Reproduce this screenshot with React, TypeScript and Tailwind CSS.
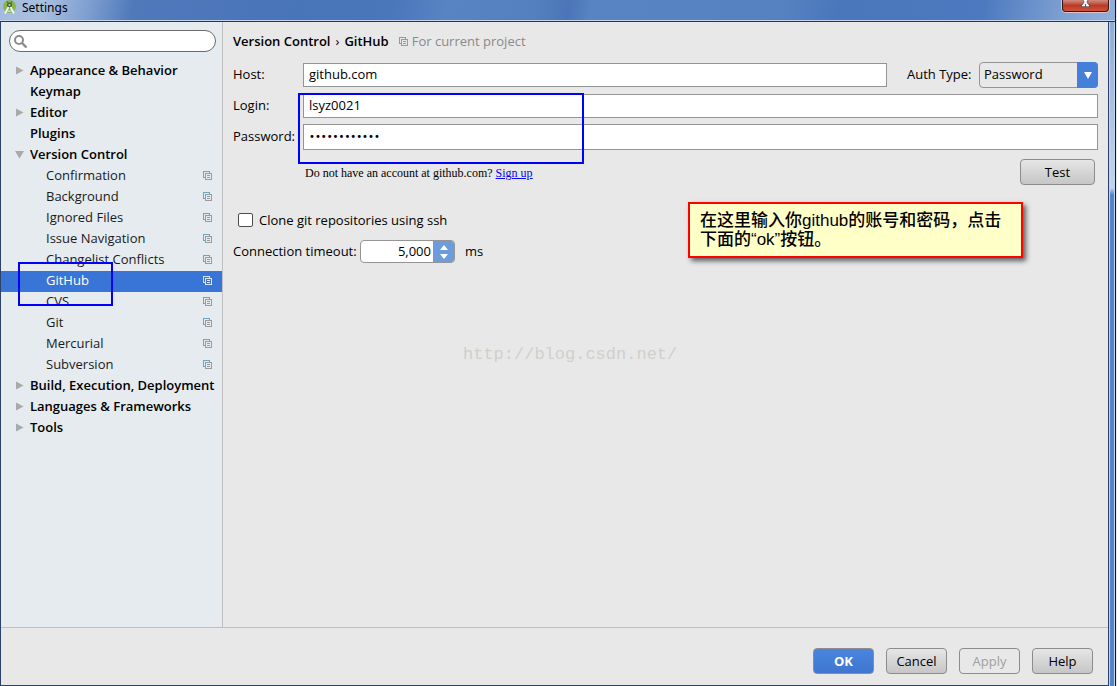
import { useState } from 'react';

type TreeItem = {
    label: string;
    level: 0 | 1;
    arrow?: 'right' | 'down';
};

const treeItems: TreeItem[] = [
    { label: 'Appearance & Behavior', level: 0, arrow: 'right' },
    { label: 'Keymap', level: 0 },
    { label: 'Editor', level: 0, arrow: 'right' },
    { label: 'Plugins', level: 0 },
    { label: 'Version Control', level: 0, arrow: 'down' },
    { label: 'Confirmation', level: 1 },
    { label: 'Background', level: 1 },
    { label: 'Ignored Files', level: 1 },
    { label: 'Issue Navigation', level: 1 },
    { label: 'Changelist Conflicts', level: 1 },
    { label: 'GitHub', level: 1 },
    { label: 'CVS', level: 1 },
    { label: 'Git', level: 1 },
    { label: 'Mercurial', level: 1 },
    { label: 'Subversion', level: 1 },
    { label: 'Build, Execution, Deployment', level: 0, arrow: 'right' },
    { label: 'Languages & Frameworks', level: 0, arrow: 'right' },
    { label: 'Tools', level: 0, arrow: 'right' }
];

const ProjectIcon = ({ selected = false }: { selected?: boolean }) => (
    <svg width="9" height="9" viewBox="0 0 9 9" fill="none" className="shrink-0" shapeRendering="crispEdges">
        <path d="M2 6.5H.5V.5H6.5V2" stroke={selected ? '#cfe0f7' : '#6aa5c4'} />
        <path d="M2.5 2.5h6v6h-6z" stroke={selected ? '#dfe7f5' : '#9b9b9b'} />
        <path d="M4 4.5h3M4 6.5h3" stroke={selected ? '#dfe7f5' : '#9b9b9b'} />
    </svg>
);

const TreeArrow = ({ direction }: { direction?: 'right' | 'down' }) => (
    <svg width="9" height="9" viewBox="0 0 9 9" fill="#a9a9a9" className="shrink-0">
        {direction === 'right' && <path d="M1 .5 8.5 4.5 1 8.500z" />}
        {direction === 'down' && <path d="M0 1h9L4.500 8.500z" />}
    </svg>
);

const AppLogo = () => (
    <svg width="15" height="15" viewBox="0 0 15 15" className="shrink-0">
        <circle cx="7.500" cy="6.500" r="6.500" fill="#86b940" />
        <circle cx="7.500" cy="5" r="2.600" fill="#4d5a4c" />
        <path d="M5 1 6 3M10 1 9 3" stroke="#4d5a4c" strokeWidth=".8" />
        <path d="M6.500 7 3 13.500M8.500 7l3.500 6.500" stroke="#f4f4f4" strokeWidth="1.800" />
        <path d="M4 10.500q3.500 1.500 7 0" stroke="#f4f4f4" strokeWidth="1" fill="none" />
        <circle cx="7.500" cy="5" r="1" fill="#cfd8c9" />
    </svg>
);

const TitleBar = () => (
    <div className="flex h-[22px] items-start justify-between border-b border-[#1f3763] bg-[linear-gradient(100deg,#a3bbdf_0%,#a9bfe0_4%,#7e9fd0_8%,#5079bb_12%,#4874b8_27%,#4a76ba_35%,#5884c4_40%,#5480c0_48%,#4b75b6_51%,#5884c4_53%,#5682c2_70%,#4a77bb_75%,#4c79bf_88%,#7c9fd2_95%,#93b0da_100%)] pl-[2px] shadow-[inset_0_-1px_0_#c3d3ec]">
        <div className="flex items-start gap-[5px]">
            <AppLogo />
            <span className="font-['Noto_Sans',sans-serif] text-xs leading-[15px]">Settings</span>
        </div>
        <button
            aria-label="Close"
            className="mr-[6px] flex h-3 w-[47px] items-start justify-center rounded-b border border-t-0 border-[#3d1712] bg-linear-to-b from-[#d08a7d] via-[#b93a25] to-[#d0533c] shadow-[0_0_0_1px_#d8c3cc]"
        >
            <svg width="11" height="7" viewBox="0 0 11 7">
                <path d="M3 -2 8 6M8 -2 3 6M1.500 5.500h3.500M6 5.500h3.500" stroke="#5b4a50" strokeWidth="3" />
                <path d="M3 -2 8 6M8 -2 3 6M2 5.500h3M6 5.500h3" stroke="#fff" strokeWidth="1.600" />
            </svg>
        </button>
    </div>
);

const Sidebar = () => {
    const [selected, setSelected] = useState('GitHub');
    const [query, setQuery] = useState('');

    return (
        <aside className="relative w-[222px] shrink-0 border-r border-[#c0c0c0] bg-[#e5ebef] pt-2">
            <div className="mx-2 mr-[6px] flex h-[22px] items-center gap-1 rounded-full border border-[#6b6b6b] bg-white pl-1">
                <svg width="13" height="13" viewBox="0 0 13 13" fill="none" stroke="#8c8c8c" strokeWidth="2" className="shrink-0">
                    <circle cx="5" cy="5" r="4" />
                    <path d="M8 8l4.500 4.500" strokeWidth="2.400" />
                </svg>
                <input
                    type="text"
                    aria-label="Search settings"
                    value={query}
                    onChange={(e) => setQuery(e.target.value)}
                    className="min-w-0 flex-1 bg-transparent outline-none"
                />
            </div>

            <ul className="mt-[9px]">
                {treeItems.map((item) => (
                    <li key={item.label}>
                        <button
                            onClick={() => setSelected(item.label)}
                            className={`flex h-[21px] w-full items-center pr-[10px] pb-[2px] pl-[14px] text-left whitespace-nowrap ${
                                selected === item.label ? 'bg-[#3875d7] text-white' : 'text-[#1a1a1a]'
                            }`}
                        >
                            <TreeArrow direction={item.arrow} />
                            <span className={item.level === 0 ? 'ml-[6px] flex-1 pb-[2px] font-semibold text-black' : 'ml-[22px] flex-1 pb-[2px]'}>
                                {item.label}
                            </span>
                            {item.level === 1 && <ProjectIcon selected={selected === item.label} />}
                        </button>
                    </li>
                ))}
            </ul>

            {/* Highlight around the GitHub entry */}
            <div className="pointer-events-none absolute top-[240px] left-[17px] h-11 w-[95px] border-2 border-[#0000ff]" />
        </aside>
    );
};

const GitHubPanel = () => {
    const [host, setHost] = useState('github.com');
    const [login, setLogin] = useState('lsyz0021');
    const [password, setPassword] = useState('abcdefghijkl');
    const [useSsh, setUseSsh] = useState(false);
    const [timeout, setTimeoutValue] = useState(5000);

    const fieldClass = 'min-w-0 flex-1 border border-[#949494] bg-white px-[5px] pb-[2px] outline-none';

    return (
        <main className="relative min-w-0 flex-1 px-[10px] pt-[9px]">
            <div className="flex h-5 items-center">
                <h1 className="flex gap-[5px] font-semibold">
                    Version Control <span className="font-normal">›</span> GitHub
                </h1>
                <span className="ml-[10px] flex items-center gap-1 text-[#8a8a8a]">
                    <ProjectIcon />
                    For current project
                </span>
            </div>

            <div className="mt-[11px] flex flex-col gap-[6px]">
                <div className="flex h-[26px] items-center">
                    <label htmlFor="host" className="w-[70px] pb-[2px]">Host:</label>
                    <input id="host" value={host} onChange={(e) => setHost(e.target.value)} className={`h-6 ${fieldClass}`} />
                    <label htmlFor="auth" className="ml-5 w-[72px] pb-[2px]">Auth Type:</label>
                    <div className="relative h-[26px] w-[119px]">
                        <select
                            id="auth"
                            className="h-full w-full appearance-none rounded-sm border border-[#949494] bg-[#e8e8e8] pb-[2px] pl-1 outline-none"
                        >
                            <option>Password</option>
                            <option>Token</option>
                        </select>
                        <span className="pointer-events-none absolute inset-y-0 right-0 flex w-[21px] items-center justify-center rounded-r-sm bg-[#467fd9]">
                            <svg width="8" height="7" viewBox="0 0 8 7" fill="#fff">
                                <path d="M0 0h8L4 7z" />
                            </svg>
                        </span>
                    </div>
                </div>
                <div className="flex h-6 items-center">
                    <label htmlFor="login" className="w-[70px] pb-[2px]">Login:</label>
                    <input id="login" value={login} onChange={(e) => setLogin(e.target.value)} className={`h-6 ${fieldClass}`} />
                </div>
                <div className="flex h-[26px] items-center">
                    <label htmlFor="password" className="w-[70px] pb-[2px]">Password:</label>
                    <input
                        id="password"
                        type="password"
                        value={password}
                        onChange={(e) => setPassword(e.target.value)}
                        className={`h-[26px] font-['DejaVu_Sans',sans-serif] text-[10px] ${fieldClass}`}
                    />
                </div>
            </div>

            <div className="mt-[9px] flex h-[26px] items-center justify-between pr-[3px] pl-[72px]">
                <p className="pt-[2px] font-['Liberation_Serif',serif] text-xs">
                    Do not have an account at github.com?{' '}
                    <a href="#signup" className="text-[#0000ff] underline">Sign up</a>
                </p>
                <button className="h-[26px] w-[75px] rounded-sm border border-[#8c8c8c] bg-linear-to-b from-[#e6e6e6] to-[#c6c6c6] pb-px">
                    Test
                </button>
            </div>

            <label className="mt-[25px] flex h-5 w-fit items-center gap-[6px] pl-[5px]">
                <input
                    type="checkbox"
                    checked={useSsh}
                    onChange={(e) => setUseSsh(e.target.checked)}
                    className="h-[14px] w-[15px] appearance-none rounded-xs border border-[#4d4d4d] bg-white checked:bg-[#467fd9]"
                />
                Clone git repositories using ssh
            </label>

            <div className="mt-[10px] flex h-[23px] items-center">
                <label htmlFor="timeout" className="w-[127px] pb-[2px]">Connection timeout:</label>
                <div className="flex h-[23px] w-[95px] overflow-hidden rounded-sm border border-[#949494] bg-white">
                    <input
                        id="timeout"
                        value={timeout.toLocaleString('en-US')}
                        onChange={(e) => setTimeoutValue(Number(e.target.value.replace(/\D/g, '')))}
                        className="min-w-0 flex-1 pr-[2px] pb-[2px] text-right outline-none"
                    />
                    <div className="flex w-[21px] flex-col items-center justify-center gap-1 bg-[#6e9bdb]">
                        <button aria-label="Increase timeout" onClick={() => setTimeoutValue(timeout + 1000)}>
                            <svg width="8" height="5" viewBox="0 0 8 5" fill="#fff" className="block">
                                <path d="M4 0l4 5H0z" />
                            </svg>
                        </button>
                        <button aria-label="Decrease timeout" onClick={() => setTimeoutValue(Math.max(0, timeout - 1000))}>
                            <svg width="8" height="5" viewBox="0 0 8 5" fill="#fff" className="block">
                                <path d="M0 0h8L4 5z" />
                            </svg>
                        </button>
                    </div>
                </div>
                <span className="ml-[10px] pb-[2px]">ms</span>
            </div>

            {/* Highlight around login and password */}
            <div className="pointer-events-none absolute top-[71px] left-[75px] h-[71px] w-[286px] border-2 border-[#0000ff]" />

            {/* Callout note */}
            <div className="absolute top-[180px] left-[465px] w-[335px] border-2 border-[#ff0000] bg-[#ffffc8] py-[7px] pr-2 pl-[10px] font-['Liberation_Sans','Noto_Sans_CJK_SC',sans-serif] text-[17px] leading-[19px] font-medium shadow-[3px_3px_5px_#00000099]">
                在这里输入你github的账号和密码，点击下面的“ok”按钮。
            </div>

            <span className="absolute top-[321px] left-[240px] font-['Liberation_Mono',monospace] text-[17px] leading-6 text-[#d0d0ca]">
                http://blog.csdn.net/
            </span>
        </main>
    );
};

const Footer = () => {
    const plain = 'h-[26px] w-[61px] rounded-sm border border-[#8c8c8c] pb-px';

    return (
        <footer className="flex h-[58px] items-start justify-end gap-3 border-t border-[#c0c0c0] pt-5 pr-[15px]">
            <button className={`${plain} bg-linear-to-b from-[#4a85df] to-[#3f76cf] font-bold text-white`}>OK</button>
            <button className={`${plain} bg-linear-to-b from-[#e6e6e6] to-[#c6c6c6]`}>Cancel</button>
            <button disabled className={`${plain} text-[#a0a0a0]`}>Apply</button>
            <button className={`${plain} bg-linear-to-b from-[#e6e6e6] to-[#c6c6c6]`}>Help</button>
        </footer>
    );
};

export const SettingsWindow = () => {
    return (
        <div className="flex h-screen bg-[#e9eaee] font-['Open_Sans','Noto_Sans_CJK_SC',sans-serif] text-[13px] leading-5 text-black">
            <div className="flex min-w-0 flex-1 flex-col">
                <TitleBar />
                <div className="flex min-h-0 flex-1">
                    <div className="flex min-w-0 flex-1 flex-col border-x border-b border-[#2c4169] bg-[#e8e8e8]">
                        <div className="flex min-h-0 flex-1">
                            <Sidebar />
                            <GitHubPanel />
                        </div>
                        <Footer />
                    </div>
                    {/* Right glass edge of the window frame */}
                    <div className="w-[6px] border-x border-[#c3d3ec] bg-linear-to-b from-[#8fadd9] via-[#c5d5ed] via-25% to-[#5584cb] to-26%" />
                </div>
            </div>
            <div className="w-[2px] border-l border-[#10182c]" />
        </div>
    );
};

export default SettingsWindow;
